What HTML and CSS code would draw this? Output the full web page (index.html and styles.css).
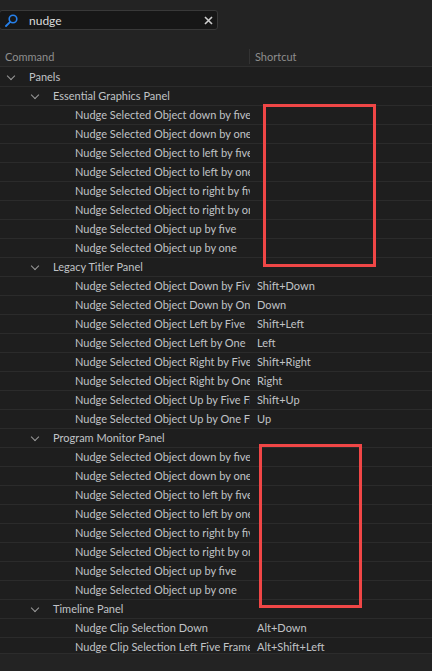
FILE: index.html
```html
<!DOCTYPE html>
<html>
<head>
<meta charset="utf-8">
<link rel="stylesheet" href="styles.css">
</head>
<body>
<div class="search">
  <svg class="search-icon" width="13" height="13" viewBox="0 0 13 13"><circle cx="8" cy="5" r="3.8" fill="none" stroke="#2680eb" stroke-width="1.6"/><line x1="5.2" y1="7.8" x2="1" y2="12" stroke="#2680eb" stroke-width="1.8" stroke-linecap="round"/></svg>
  <span class="search-text">nudge</span>
  <svg class="clear-icon" width="9" height="9" viewBox="0 0 9 9"><path d="M1 1L8 8M8 1L1 8" stroke="#cfcfcf" stroke-width="1.6"/></svg>
</div>
<div class="header">
  <div class="hcol cmd">Command</div>
  <div class="hcol sc">Shortcut</div>
</div>
<div class="list">
  <div class="row group l1"><span class="chev"></span>Panels</div>
  <div class="row group l2"><span class="chev"></span>Essential Graphics Panel</div>
  <div class="row"><div class="cmd leaf">Nudge Selected Object down by five</div><div class="sc"></div></div>
  <div class="row"><div class="cmd leaf">Nudge Selected Object down by one</div><div class="sc"></div></div>
  <div class="row"><div class="cmd leaf">Nudge Selected Object to left by five</div><div class="sc"></div></div>
  <div class="row"><div class="cmd leaf">Nudge Selected Object to left by one</div><div class="sc"></div></div>
  <div class="row"><div class="cmd leaf">Nudge Selected Object to right by five</div><div class="sc"></div></div>
  <div class="row"><div class="cmd leaf">Nudge Selected Object to right by one</div><div class="sc"></div></div>
  <div class="row"><div class="cmd leaf">Nudge Selected Object up by five</div><div class="sc"></div></div>
  <div class="row"><div class="cmd leaf">Nudge Selected Object up by one</div><div class="sc"></div></div>
  <div class="row group l2"><span class="chev"></span>Legacy Titler Panel</div>
  <div class="row"><div class="cmd leaf">Nudge Selected Object Down by Five Frames</div><div class="sc">Shift+Down</div></div>
  <div class="row"><div class="cmd leaf">Nudge Selected Object Down by One Frame</div><div class="sc">Down</div></div>
  <div class="row"><div class="cmd leaf">Nudge Selected Object Left by Five</div><div class="sc">Shift+Left</div></div>
  <div class="row"><div class="cmd leaf">Nudge Selected Object Left by One</div><div class="sc">Left</div></div>
  <div class="row"><div class="cmd leaf">Nudge Selected Object Right by Five</div><div class="sc">Shift+Right</div></div>
  <div class="row"><div class="cmd leaf">Nudge Selected Object Right by One</div><div class="sc">Right</div></div>
  <div class="row"><div class="cmd leaf">Nudge Selected Object Up by Five Frames</div><div class="sc">Shift+Up</div></div>
  <div class="row"><div class="cmd leaf">Nudge Selected Object Up by One Frame</div><div class="sc">Up</div></div>
  <div class="row group l2"><span class="chev"></span>Program Monitor Panel</div>
  <div class="row"><div class="cmd leaf">Nudge Selected Object down by five</div><div class="sc"></div></div>
  <div class="row"><div class="cmd leaf">Nudge Selected Object down by one</div><div class="sc"></div></div>
  <div class="row"><div class="cmd leaf">Nudge Selected Object to left by five</div><div class="sc"></div></div>
  <div class="row"><div class="cmd leaf">Nudge Selected Object to left by one</div><div class="sc"></div></div>
  <div class="row"><div class="cmd leaf">Nudge Selected Object to right by five</div><div class="sc"></div></div>
  <div class="row"><div class="cmd leaf">Nudge Selected Object to right by one</div><div class="sc"></div></div>
  <div class="row"><div class="cmd leaf">Nudge Selected Object up by five</div><div class="sc"></div></div>
  <div class="row"><div class="cmd leaf">Nudge Selected Object up by one</div><div class="sc"></div></div>
  <div class="row group l2"><span class="chev"></span>Timeline Panel</div>
  <div class="row"><div class="cmd leaf">Nudge Clip Selection Down</div><div class="sc">Alt+Down</div></div>
  <div class="row"><div class="cmd leaf">Nudge Clip Selection Left Five Frames</div><div class="sc">Alt+Shift+Left</div></div>
</div>
<div class="mark mark-a"></div>
<div class="mark mark-b"></div>
</body>
</html>
```

FILE: styles.css
```css
html, body {
  margin: 0;
  padding: 0;
  background: #232323;
  font-family: Lato, "Liberation Sans", sans-serif;
  font-size: 11px;
  color: #c0c3c6;
  height: 671px;
  overflow: hidden;
  position: relative;
}

.search {
  margin-top: 10px;
  margin-left: -1px;
  width: 217px;
  height: 18px;
  border: 1px solid #393939;
  border-radius: 3px;
  background: #171717;
  display: flex;
  align-items: center;
}

.search-icon {
  margin-left: 5px;
  flex: none;
}

.search-text {
  margin-left: 11px;
  color: #dcdcdc;
  font-size: 12px;
  flex: 1;
}

.clear-icon {
  margin-right: 4px;
  flex: none;
}

.header {
  margin-top: 17px;
  height: 19px;
  display: flex;
  align-items: center;
  border-bottom: 1px solid #2e2e2e;
  color: #8e8e8e;
}

.hcol.cmd {
  width: 250px;
  box-sizing: border-box;
  padding-left: 5px;
  border-right: 1px solid #333;
  height: 15px;
  line-height: 15px;
}

.hcol.sc {
  padding-left: 5px;
}

.list {
  padding-top: 1px;
  height: 585px;
  overflow: hidden;
  background: #1e1e1e;
  border-bottom: 1px solid #2c2c2c;
}

.row {
  height: 18px;
  line-height: 18px;
  border-bottom: 1px solid #2b2b2b;
  display: flex;
  align-items: center;
  white-space: nowrap;
}

.row .cmd {
  width: 250px;
  flex: none;
  overflow: hidden;
  box-sizing: border-box;
}

.row .leaf {
  padding-left: 75px;
}

.row .sc {
  padding-left: 7px;
}

.group.l1 {
  padding-left: 6px;
}

.group.l2 {
  padding-left: 30px;
}

.chev {
  width: 5px;
  height: 5px;
  border-right: 1px solid #9a9a9a;
  border-bottom: 1px solid #9a9a9a;
  transform: rotate(45deg);
  margin: -3px 15px 0 2px;
  flex: none;
}

.mark {
  position: absolute;
  border: 3px solid #f04646;
  box-sizing: border-box;
}

.mark-a {
  left: 263px;
  top: 104px;
  width: 113px;
  height: 163px;
}

.mark-b {
  left: 259px;
  top: 444px;
  width: 103px;
  height: 164px;
}
```
